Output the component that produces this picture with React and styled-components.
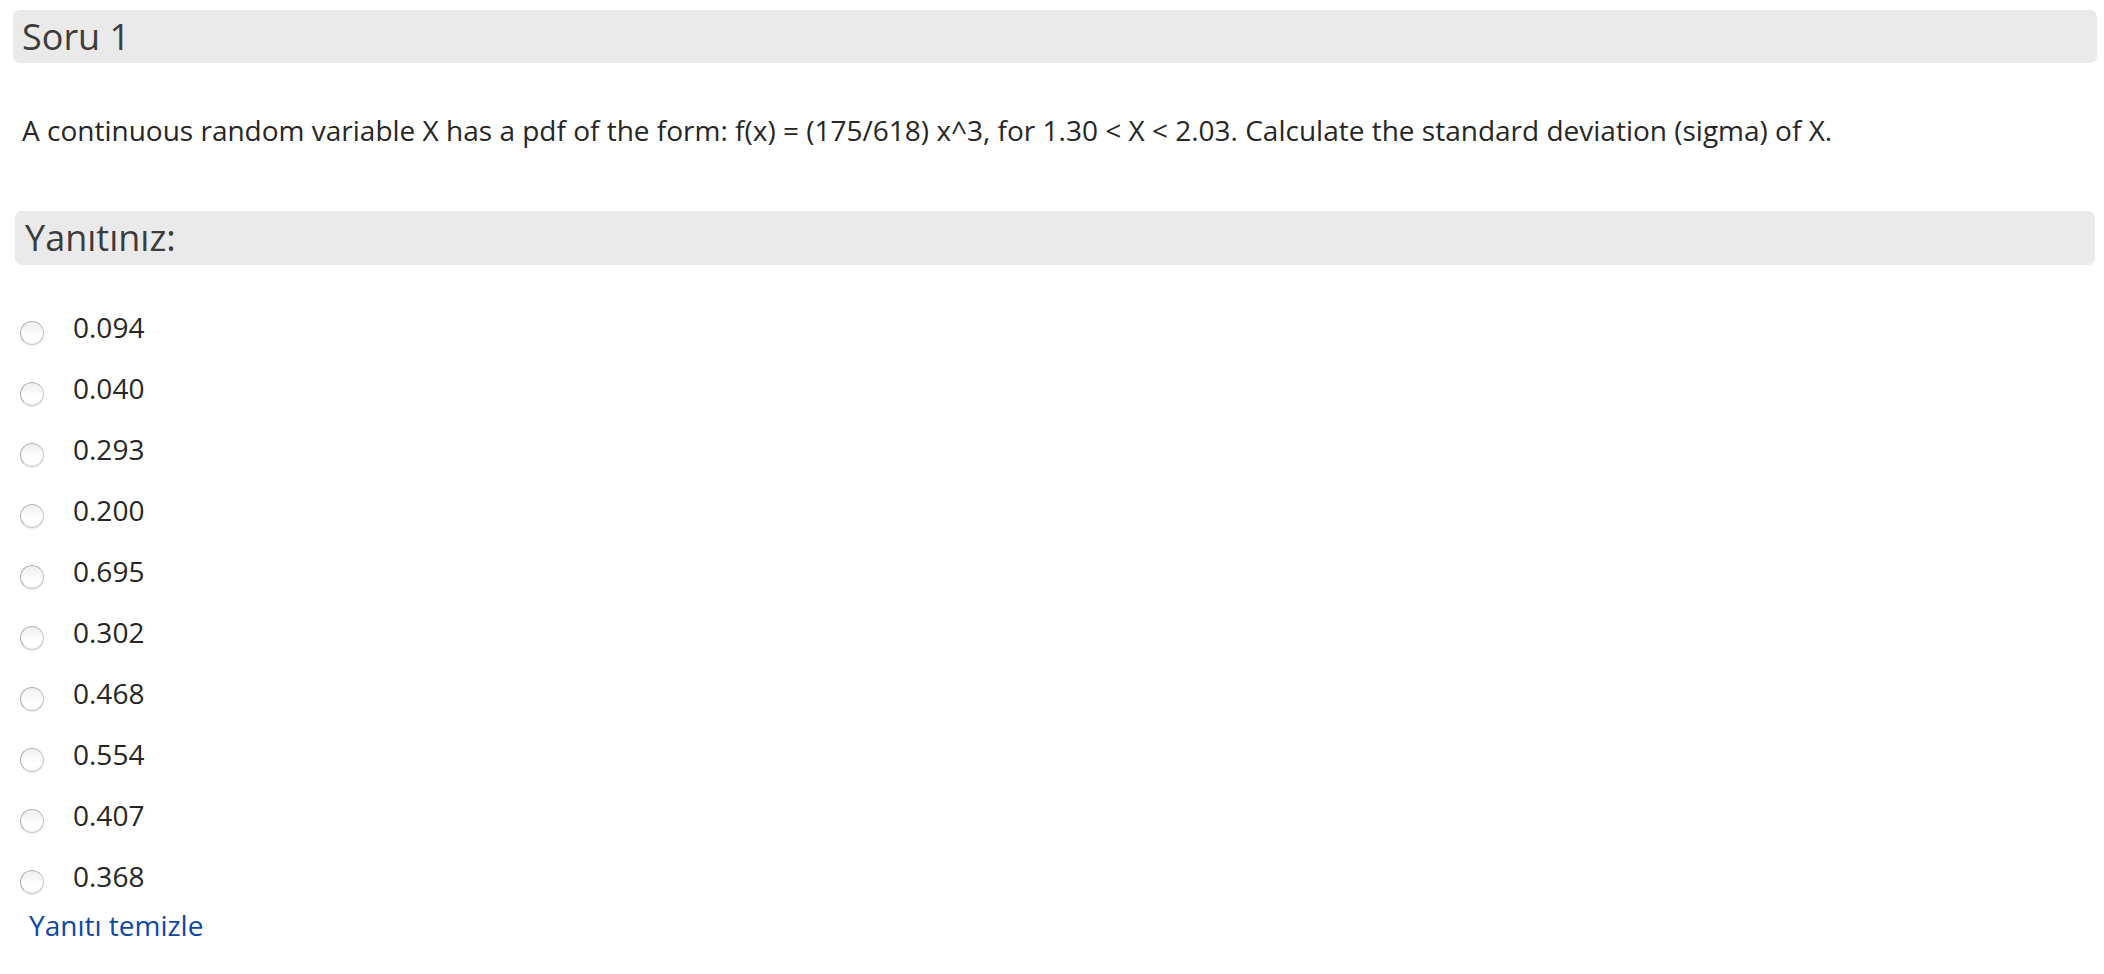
import React from "react";
import styled, { createGlobalStyle } from "styled-components";

const Global = createGlobalStyle`
  html, body { margin: 0; padding: 0; background: #fff; }
  body { font-family: "Open Sans", "Noto Sans", sans-serif; color: #222; }
`;

const Page = styled.div`
  padding: 10px 7px 0 13px;
`;

const Heading = styled.div`
  background: #eaeaea;
  border-radius: 7px;
  height: ${(p) => p.$h}px;
  line-height: ${(p) => p.$h}px;
  margin: ${(p) => p.$m};
  padding-left: ${(p) => p.$pl}px;
  font-size: 36px;
  color: #3c3c3c;
  font-weight: 400;
`;

const Question = styled.p`
  margin: 48px 0 0 9px;
  font-size: 28px;
  line-height: 38px;
  color: #262626;
`;

const Options = styled.div`
  margin-top: 31px;
  display: flex;
  flex-direction: column;
`;

const Row = styled.label`
  display: flex;
  align-items: center;
  height: 61px;
  font-size: 28px;
  line-height: 38px;
  color: #262626;
  cursor: pointer;
`;

const Radio = styled.span`
  box-sizing: border-box;
  width: 24px;
  height: 24px;
  border-radius: 50%;
  margin: 12px 29px 0 7px;
  border: 1px solid #b0b0b0;
  border-bottom-color: #c8c8c8;
  border-right-color: #c8c8c8;
  background: linear-gradient(180deg, #f0f0f0 0%, #ffffff 65%);
  box-shadow: inset 0 -1px 1px rgba(0, 0, 0, 0.06), 0 1px 1px rgba(0, 0, 0, 0.08);
  flex: none;
`;

const Clear = styled.a`
  display: block;
  margin-left: 16px;
  font-size: 28px;
  line-height: 38px;
  color: #0f47a8;
  text-decoration: none;
`;

const answers = ["0.094", "0.040", "0.293", "0.200", "0.695", "0.302", "0.468", "0.554", "0.407", "0.368"];

export default function App() {
  return (
    <>
      <Global />
      <Page>
        <Heading $h={53} $m="0" $pl={9}>Soru 1</Heading>
        <Question>
          A continuous random variable X has a pdf of the form: f(x) = (175/618) x^3, for 1.30 &lt; X &lt; 2.03. Calculate the standard deviation (sigma) of X.
        </Question>
        <Heading $h={54} $m="62px 2px 0 2px" $pl={10}>Yanıtınız:</Heading>
        <Options>
          {answers.map((a) => (
            <Row key={a}>
              <Radio />
              <span>{a}</span>
            </Row>
          ))}
        </Options>
        <Clear href="#">Yanıtı temizle</Clear>
      </Page>
    </>
  );
}
